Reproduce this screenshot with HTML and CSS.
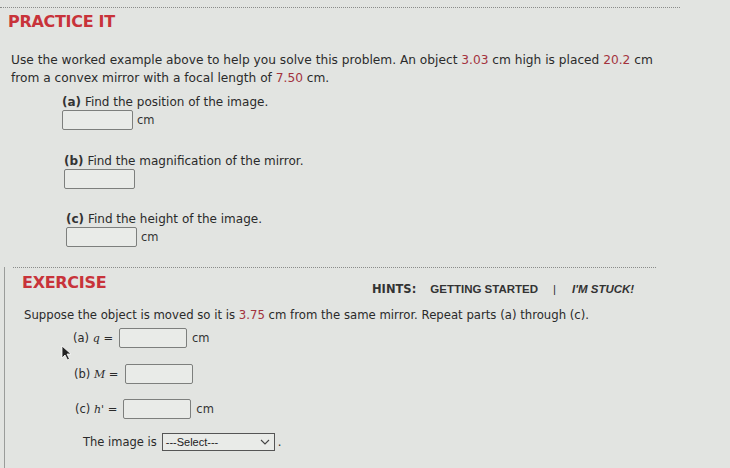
FILE: index.html
```html
<!DOCTYPE html>
<html>
<head>
<meta charset="utf-8">
<link rel="stylesheet" href="styles.css">
</head>
<body>
<div class="page">
  <div class="rule top-rule"></div>
  <h2 class="heading practice">PRACTICE IT</h2>
  <p class="intro">Use the worked example above to help you solve this problem. An object <span class="num">3.03</span> cm high is placed <span class="num">20.2</span> cm<br>from a convex mirror with a focal length of <span class="num">7.50</span> cm.</p>

  <div class="part part-a">
    <div class="q"><b>(a)</b> Find the position of the image.</div>
    <div class="answer"><span class="box"></span><span class="unit">cm</span></div>
  </div>
  <div class="part part-b">
    <div class="q"><b>(b)</b> Find the magnification of the mirror.</div>
    <div class="answer"><span class="box"></span></div>
  </div>
  <div class="part part-c">
    <div class="q"><b>(c)</b> Find the height of the image.</div>
    <div class="answer"><span class="box"></span><span class="unit">cm</span></div>
  </div>

  <div class="exercise">
    <div class="rule mid-rule"></div>
    <div class="ex-head">
      <h2 class="heading">EXERCISE</h2>
      <div class="hints"><b class="hints-label">HINTS:</b><span class="link">GETTING STARTED</span><span class="sep">|</span><span class="link stuck">I'M STUCK!</span></div>
    </div>
    <p class="suppose">Suppose the object is moved so it is <span class="num">3.75</span> cm from the same mirror. Repeat parts (a) through (c).</p>
    <div class="eq eq-a"><span class="lbl">(a) <i>q</i> =</span><span class="box sm"></span><span class="unit">cm</span></div>
    <div class="eq eq-b"><span class="lbl">(b) <i>M</i> =</span><span class="box sm"></span></div>
    <div class="eq eq-c"><span class="lbl">(c) <i>h'</i> =</span><span class="box sm"></span><span class="unit">cm</span></div>
    <div class="select-row">The image is <span class="select"><span>---Select---</span><svg width="10" height="6" viewBox="0 0 10 6"><path d="M1 1 L5 5 L9 1" fill="none" stroke="#444" stroke-width="1.1"/></svg></span><span class="dot">.</span></div>
    <svg class="cursor" width="12" height="16" viewBox="0 0 12 16"><path d="M1 1 L1 13 L4 10 L6.5 15 L8.5 14 L6 9 L10 9 Z" fill="#222" stroke="#fff" stroke-width="0.8"/></svg>
  </div>
</div>
</body>
</html>
```
FILE: styles.css
```css
html, body {
  margin: 0;
  padding: 0;
}
body {
  background: #e2e4e1;
  font-family: "DejaVu Sans", Verdana, sans-serif;
  color: #2a2a2a;
  width: 730px;
  height: 468px;
  overflow: hidden;
}
.page {
  position: relative;
  padding-top: 7px;
}
.rule {
  border-top: 1.5px dotted #8a8c8a;
}
.top-rule {
  width: 680px;
}
.heading {
  margin: 0;
  font-size: 16px;
  font-weight: bold;
  color: #c8333a;
  letter-spacing: -0.3px;
}
.practice {
  margin: 4px 0 0 8px;
  line-height: 20px;
}
.intro {
  margin: 19px 0 0 11px;
  font-size: 12.2px;
  line-height: 18px;
  color: #2b2b2b;
}
.num {
  color: #a3323d;
}
.part {
  font-size: 12px;
}
.q {
  line-height: 16px;
}
.q b {
  color: #333;
}
.part-a { margin: 7px 0 0 62px; }
.part-b { margin: 23px 0 0 64px; }
.part-c { margin: 22px 0 0 66px; }
.answer {
  display: flex;
  align-items: center;
  gap: 4px;
  height: 20px;
}
.box {
  display: inline-block;
  width: 71px;
  height: 20px;
  border: 1px solid #7d7f7d;
  border-radius: 2px;
  background: #e9ebe8;
  box-sizing: border-box;
}
.unit {
  font-size: 11.5px;
  color: #333;
}
.exercise {
  position: relative;
  margin: 20px 0 0 4px;
  padding-left: 8px;
  border-left: 1px solid #9a9c9a;
  height: 210px;
}
.mid-rule {
  width: 643px;
}
.ex-head {
  display: flex;
  align-items: flex-end;
  margin-top: 6px;
  padding-left: 9px;
}
.ex-head .heading {
  width: 350px;
  line-height: 18px;
}
.hints {
  display: flex;
  align-items: center;
  font-family: "Liberation Sans", Arial, sans-serif;
  font-size: 11.5px;
  font-weight: bold;
  color: #333;
  margin-bottom: -4px;
}
.hints-label {
  font-family: "DejaVu Sans", Verdana, sans-serif;
  font-size: 11.5px;
  margin-right: 14px;
}
.sep {
  margin: 0 16px 0 15px;
  font-weight: normal;
}
.stuck {
  font-style: italic;
}
.suppose {
  margin: 15px 0 0 11px;
  font-size: 11.7px;
  line-height: 16px;
}
.eq {
  display: flex;
  align-items: center;
  font-size: 11.5px;
  height: 20px;
}
.eq .lbl {
  margin-right: 6px;
}
.eq i {
  font-family: "DejaVu Serif", serif;
  font-size: 11px;
}
.eq .box.sm {
  width: 68px;
}
.eq .unit {
  margin-left: 5px;
}
.eq-a { margin: 5px 0 0 60px; }
.eq-b { margin: 16px 0 0 61px; }
.eq-c { margin: 15px 0 0 62px; }
.select-row {
  display: flex;
  align-items: center;
  margin: 13px 0 0 70px;
  font-size: 11.5px;
  height: 20px;
}
.select {
  display: inline-flex;
  align-items: center;
  justify-content: space-between;
  margin-left: 5px;
  width: 113px;
  height: 18px;
  box-sizing: border-box;
  border: 1px solid #555;
  background: #e9ebe8;
  padding: 0 4px 0 3px;
  font-family: "Liberation Sans", Arial, sans-serif;
  font-size: 11px;
  color: #222;
}
.dot {
  margin-left: 3px;
}
.cursor {
  position: absolute;
  left: 56px;
  top: 78px;
}
```
